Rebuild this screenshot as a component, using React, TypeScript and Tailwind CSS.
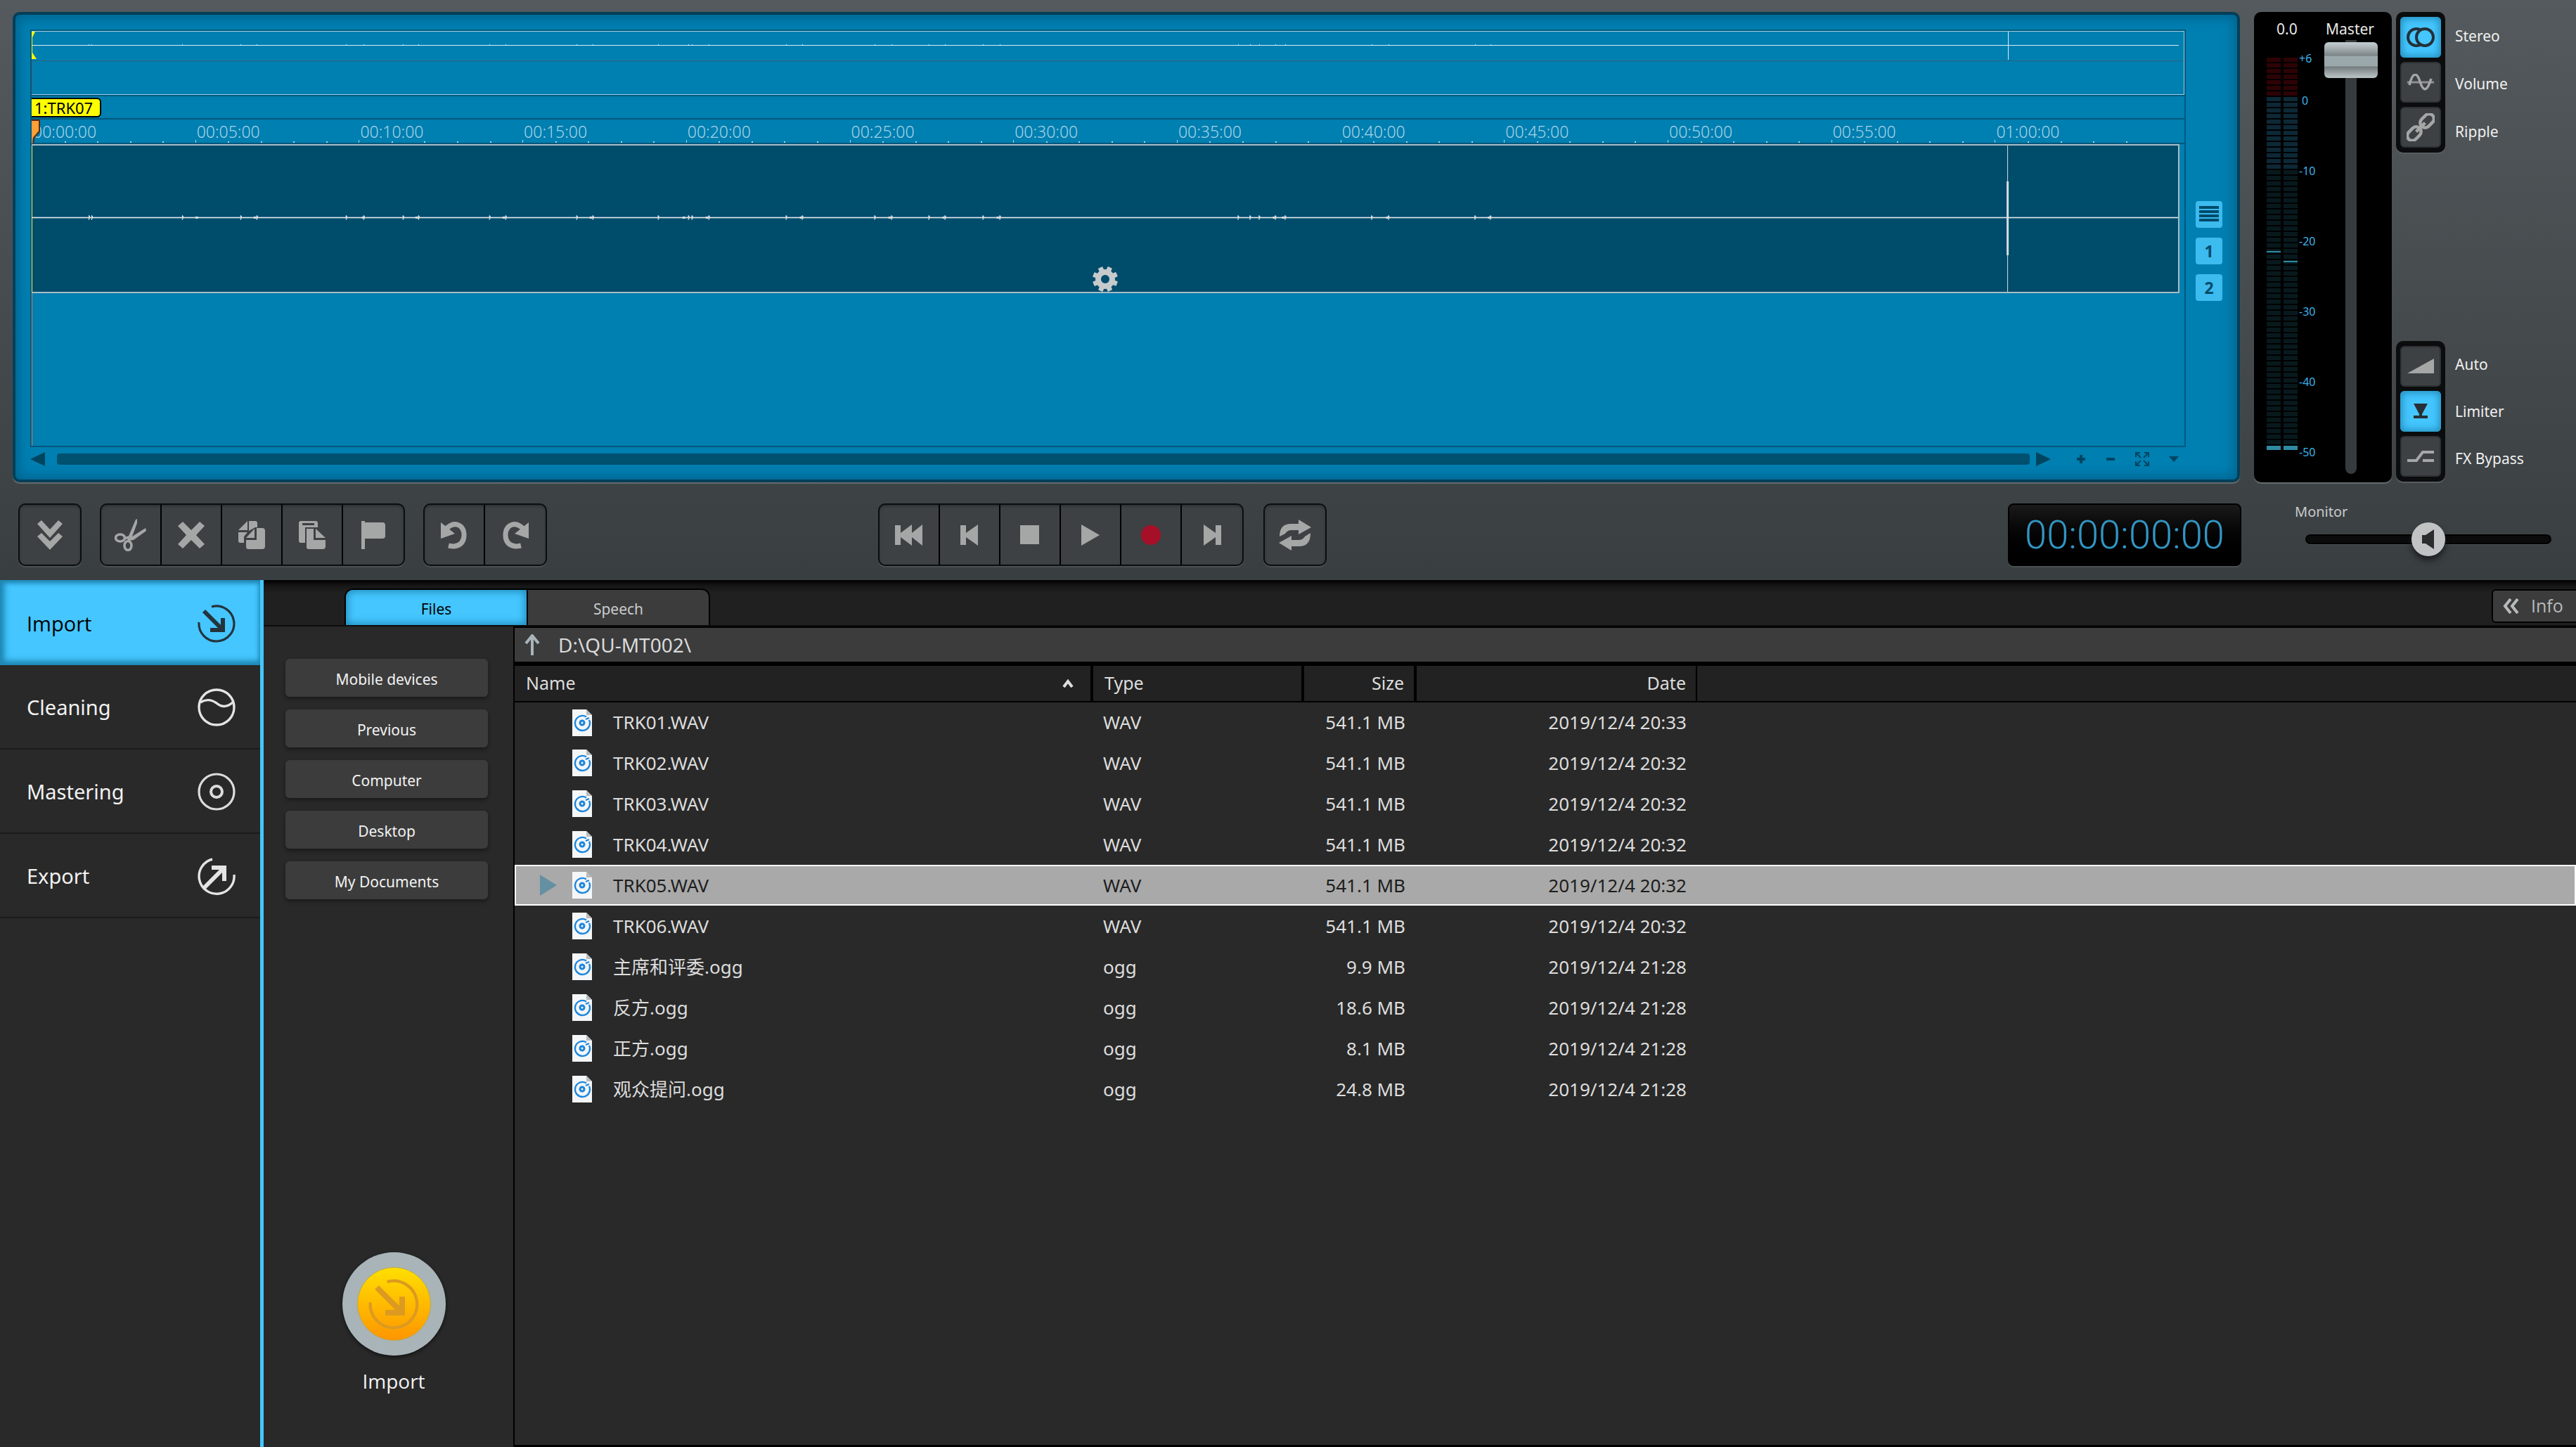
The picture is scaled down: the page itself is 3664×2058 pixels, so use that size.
import React from 'react';

const GREY = '#a5a7a7';

type SvgProps = { w: number; h: number; children: React.ReactNode; className?: string };
const Svg = ({ w, h, children, className }: SvgProps) => (
  <svg width={w} height={h} viewBox={`0 0 ${w} ${h}`} className={className} aria-hidden="true">
    {children}
  </svg>
);

/* ---------- toolbar icons ---------- */

const ChevronsDown = () => (
  <Svg w={36} h={42}>
    <path d="M0 5 L6 0 L18 13 L30 0 L36 5 L18 25 Z M0 23 L6 18 L18 30 L30 18 L36 23 L18 42 Z" fill={GREY} />
  </Svg>
);
const Scissors = () => (
  <Svg w={46} h={46}>
    <g fill="none" stroke={GREY} strokeWidth="3.5">
      <ellipse cx="8" cy="27" rx="6.5" ry="5" />
      <ellipse cx="19" cy="38" rx="5" ry="6.5" />
      <path d="M13 28 L24 25 M20 32 L22 24" />
    </g>
    <path d="M18 29 L30 1 L32 0 L32 6 L25 25 L44 13 L45 17 L27 30 L20 31 Z" fill={GREY} />
  </Svg>
);
const Cross = () => (
  <Svg w={38} h={38}>
    <path d="M0 6 L7 0 L19 12 L31 0 L38 6 L26 19 L38 32 L31 38 L19 26 L7 38 L0 32 L12 19 Z" fill={GREY} />
  </Svg>
);
const Copy = () => (
  <Svg w={38} h={40}>
    <g fill={GREY}>
      <path d="M0 13 L13 0 V13 Z" />
      <path d="M15 0 H24 Q27 0 27 3 V9 H24 L15 14 Z" />
      <path d="M0 16 H13 L8 22 V31 H3 Q0 31 0 28 Z" />
      <path d="M11 24 L23 11 V24 Z" />
      <path d="M26 10 H34 Q38 10 38 14 V36 Q38 40 34 40 H14 Q11 40 11 36 V27 H26 Z" />
    </g>
  </Svg>
);
const Paste = () => (
  <Svg w={38} h={40}>
    <g fill={GREY}>
      <path fillRule="evenodd" d="M3 0 H24 Q27 0 27 3 V9 H9 V31 H3 Q0 31 0 28 V3 Q0 0 3 0 Z M5 3 V6 H22 V3 Z" />
      <path d="M11 11 H21 V27 H38 V36 Q38 40 34 40 H14 Q11 40 11 37 Z" />
      <path d="M24 11 L38 24 H24 Z" />
    </g>
  </Svg>
);
const Flag = () => (
  <Svg w={34} h={40}>
    <path d="M0 0 H5 V2 H30 Q34 2 34 6 V21 Q34 25 30 25 H5 V40 H0 Z" fill={GREY} />
  </Svg>
);
const Undo = () => (
  <Svg w={38} h={40}>
    <path d="M7 12 Q15 3 23 5 Q33 8 33 20 Q33 34 19 36 Q15 36 11 35" fill="none" stroke={GREY} strokeWidth="7" />
    <path d="M0 2 L20 18 L0 25 Z" fill={GREY} />
  </Svg>
);
const Redo = () => (
  <Svg w={38} h={40}>
    <path d="M31 12 Q23 3 15 5 Q5 8 5 20 Q5 34 19 36 Q23 36 27 35" fill="none" stroke={GREY} strokeWidth="7" />
    <path d="M38 2 L18 18 L38 25 Z" fill={GREY} />
  </Svg>
);
const ToStart = () => (
  <Svg w={40} h={30}>
    <path d="M0 1 H8 V12 L24 0 V12 L39 0 V30 L24 18 V30 L8 18 V29 H0 Z" fill={GREY} />
  </Svg>
);
const Prev = () => (
  <Svg w={26} h={30}>
    <path d="M0 1 H8 V12 L25 0 V30 L8 18 V29 H0 Z" fill={GREY} />
  </Svg>
);
const Next = () => (
  <Svg w={26} h={30}>
    <path d="M26 1 H18 V12 L1 0 V30 L18 18 V29 H26 Z" fill={GREY} />
  </Svg>
);
const Stop = () => (
  <Svg w={28} h={28}>
    <rect width="27" height="27" fill={GREY} />
  </Svg>
);
const Play = () => (
  <Svg w={28} h={30}>
    <path d="M1 0 L27 15 L1 30 Z" fill={GREY} />
  </Svg>
);
const Record = () => (
  <Svg w={28} h={28}>
    <circle cx="14" cy="14" r="14" fill="#a60f28" />
  </Svg>
);
const Loop = () => (
  <Svg w={46} h={44}>
    <g fill={GREY}>
      <path d="M1 24 Q1 6 17 6 H28 V0 L46 11 L28 21 V15 H18 Q12 15 9 20 Z" />
      <path d="M45 19 Q45 38 29 38 H18 V44 L0 33 L18 23 V29 H28 Q34 29 37 24 Z" />
    </g>
  </Svg>
);

/* ---------- sidebar icons ---------- */

const ImportGlyph = ({ size, color }: { size: number; color: string }) => (
  <svg width={size} height={size} viewBox="0 0 54 54" aria-hidden="true" fill="none" stroke={color}>
    <path d="M20 3 A25 25 0 1 1 2 25" strokeWidth="3.2" />
    <path d="M9 9 L34 34" strokeWidth="6" />
    <path d="M36 19 V36 H18" strokeWidth="6" />
  </svg>
);
const CleaningGlyph = () => (
  <Svg w={54} h={54}>
    <g fill="none" stroke="#e4e4e4" strokeWidth="3.4">
      <circle cx="27" cy="27" r="25" />
      <path d="M4 20 C12 15 20 16 27 21 C34 27 42 27 50 20" />
    </g>
  </Svg>
);
const MasteringGlyph = () => (
  <Svg w={54} h={54}>
    <g fill="none" stroke="#dcdcdc" strokeWidth="3.2">
      <circle cx="27" cy="27" r="25" />
      <circle cx="27" cy="27" r="8" strokeWidth="4" />
    </g>
  </Svg>
);
const ExportGlyph = () => (
  <Svg w={54} h={54}>
    <g fill="none" stroke="#e4e4e4">
      <path d="M21 3 A25 25 0 1 0 52 25" strokeWidth="3.4" />
      <path d="M9 44 L36 17" strokeWidth="6" />
      <path d="M20 15 H38 V34" strokeWidth="6" />
    </g>
  </Svg>
);

/* ---------- mixer icons ---------- */

const StereoIcon = () => (
  <Svg w={40} h={28}>
    <g fill="none" stroke="#23313a" strokeWidth="4">
      <circle cx="14" cy="14" r="12" />
      <circle cx="26" cy="14" r="12" fill="#45c6ff" />
    </g>
  </Svg>
);
const VolumeIcon = () => (
  <Svg w={38} h={24}>
    <path d="M0 12 H38" stroke="#8e9091" strokeWidth="3" />
    <path d="M3 16 C8 -4 14 -2 18 11 C23 26 28 26 34 7" fill="none" stroke={GREY} strokeWidth="3.5" />
  </Svg>
);
const RippleIcon = () => (
  <Svg w={40} h={40}>
    <g fill="none" stroke={GREY} strokeWidth="4.5" transform="rotate(-45 20 20)">
      <rect x="-4" y="13" width="22" height="14" rx="7" />
      <rect x="22" y="13" width="22" height="14" rx="7" />
      <path d="M11 20 H29" />
    </g>
  </Svg>
);
const AutoIcon = () => (
  <Svg w={38} h={22}>
    <path d="M0 21 L38 0 V21 Z" fill={GREY} />
  </Svg>
);
const LimiterIcon = () => (
  <Svg w={22} h={22}>
    <path d="M1 0 H21 L13 15 V17 H21 V21 H1 V17 H9 V15 Z" fill="#263036" />
  </Svg>
);
const BypassIcon = () => (
  <Svg w={38} h={18}>
    <path d="M0 15 H13 L22 3 H38 M22 15 H38" fill="none" stroke={GREY} strokeWidth="4" />
  </Svg>
);

const GearIcon = () => (
  <Svg w={36} h={36}>
    <g fill="#c6cacc">
      <path fillRule="evenodd" d="M18 4 a14 14 0 1 0 0.01 0 Z M18 12 a6 6 0 1 1 -0.01 0 Z" />
      {[22, 67, 112, 157, 202, 247, 292, 337].map((a) => (
        <rect key={a} x="14.5" y="0" width="7" height="8" rx="1" transform={`rotate(${a} 18 18)`} />
      ))}
    </g>
  </Svg>
);

const FileIcon = () => (
  <Svg w={28} h={38}>
    <path d="M0 0 H20 L28 8 V38 H0 Z" fill="#f4f6f7" />
    <path d="M20 0 L28 8 H20 Z" fill="#b9bcbe" />
    <path d="M20 10.500 A10.500 10.500 0 1 0 24 15" fill="none" stroke="#1c86dd" strokeWidth="2.400" />
    <circle cx="14" cy="19" r="3" fill="none" stroke="#1c86dd" strokeWidth="3" />
    <path d="M19 14 L24 12" stroke="#1c86dd" strokeWidth="2.400" />
  </Svg>
);

/* ---------- arranger ---------- */

const BLIPS = [
  81, 85, 214, 297, 320, 447, 472, 528, 550, 651, 674, 775, 798, 891, 934, 939, 963, 1073, 1096, 1199, 1223, 1276,
  1299, 1353, 1377, 1716, 1733, 1746, 1769, 1783, 1906, 1930, 2053, 2075,
];
const WIDE_BLIPS = [235, 318, 472, 548, 672, 796, 928, 961, 1095, 1221, 1298, 1375, 1768, 1781, 1929, 2074];

const TIMES = [
  '00:00:00', '00:05:00', '00:10:00', '00:15:00', '00:20:00', '00:25:00', '00:30:00',
  '00:35:00', '00:40:00', '00:45:00', '00:50:00', '00:55:00', '01:00:00',
];

const Arranger = () => (
  <section
    aria-label="Arranger"
    className="flex flex-1 flex-col rounded-[10px] border-4 border-[#043f57] bg-[#007fb1] px-[21px] pt-[21px] pb-3 shadow-[inset_0_0_18px_3px_#00608a,0_2px_1px_#686d70]"
  >
    <div className="flex">
      <div className="min-w-0 flex-1 border-2 border-[#00587c]">
        {/* overview */}
        <div className="h-[91px] border border-[#9fd0e6] border-l-0">
          <svg width="100%" height="89" viewBox="0 0 3061 89" preserveAspectRatio="none" aria-hidden="true" className="block">
            <rect x="0" y="41" width="3061" height="1" fill="#2a6583" />
            <rect x="0" y="19" width="3054" height="1" fill="#d6edf6" />
            {BLIPS.map((x) => (
              <rect key={x} x={x} y="18" width="1" height="1" fill="#d6edf6" />
            ))}
            <rect x="2811" y="0" width="1" height="40" fill="#d6edf6" />
            <path d="M0 42 V89" stroke="#8a4a4a" strokeWidth="1" />
            <path d="M0 0 H5 L1 8 V30 L7 39 H0 Z" fill="#ffff00" />
          </svg>
        </div>
        {/* marker lane */}
        <div className="flex h-[35px] items-center border-y-2 border-[#00587c]">
          <div className="flex h-7 items-center rounded-r-md border-2 border-l-0 border-black bg-[#ffff00] pr-2.5 pl-1 text-[22px] leading-6 text-black">
            1:TRK07
          </div>
        </div>
        {/* ruler */}
        <div className="relative h-[35px] border-b-2 border-[#00587c]">
          <div className="flex h-full overflow-hidden">
            {TIMES.map((t) => (
              <div key={t} className="relative w-[7.6%] shrink-0 pl-0.5 text-[23px] leading-[34px] font-light text-[#a9d4e6]">
                {t}
                <div className="absolute inset-x-0 bottom-0 flex h-1 items-end">
                  <span className="h-1 w-1/5 border-l border-[#a9d4e6]" />
                  <span className="h-0.5 w-1/5 border-l-2 border-[#a9d4e6]" />
                  <span className="h-0.5 w-1/5 border-l-2 border-[#a9d4e6]" />
                  <span className="h-0.5 w-1/5 border-l-2 border-[#a9d4e6]" />
                  <span className="h-0.5 w-1/5 border-l-2 border-[#a9d4e6]" />
                </div>
              </div>
            ))}
          </div>
          <svg width="14" height="34" viewBox="0 0 14 34" className="absolute top-0 left-0" aria-hidden="true">
            <path d="M0 0 H10 V16 L1 28 V34 H0 Z" fill="#ff9f38" />
            <path d="M0 1 H11 V17 L3 26 V34" fill="none" stroke="#5b2c12" strokeWidth="2" />
          </svg>
        </div>
        {/* track */}
        <div className="relative mr-[7px] h-[212px] border-2 border-l-0 border-[#a9bcc6] bg-[#004c6b]">
          <svg width="100%" height="208" viewBox="0 0 3054 208" preserveAspectRatio="none" className="block" aria-hidden="true">
            <rect x="0" y="101" width="3054" height="3" fill="#4a7f98" />
            <rect x="0" y="102" width="3054" height="1" fill="#e2e8ea" />
            {BLIPS.map((x) => (
              <g key={x} fill="#d5dcdf">
                <rect x={x} y="99" width="1" height="7" />
                <rect x={x} y="100" width="2" height="4" />
              </g>
            ))}
            {WIDE_BLIPS.map((x) => (
              <rect key={x} x={x - 2} y="101" width="4" height="3" fill="#d5dcdf" />
            ))}
            <rect x="2811" y="0" width="1" height="208" fill="#d5dcdf" />
            <rect x="2810" y="51" width="3" height="105" fill="#d5dcdf" />
            <rect x="0" y="0" width="1" height="208" fill="#f5ee5a" />
          </svg>
          <button aria-label="Track settings" className="absolute bottom-0 left-1/2 -translate-x-1/2">
            <GearIcon />
          </button>
        </div>
        <div className="h-[217px] border-l border-[#c08a6a]" />
      </div>
      <div className="flex flex-col gap-3.5 pt-[244px] pl-3.5">
        <button aria-label="All tracks" className="flex size-[38px] items-center justify-center rounded bg-[#3cbbef]">
          <Svg w={28} h={24}>
            <path d="M0 2 H28 M0 8 H28 M0 14 H28 M0 20 H28" stroke="#004c6b" strokeWidth="4" />
          </Svg>
        </button>
        <button className="size-[38px] rounded bg-[#3cbbef] text-[23px] leading-[38px] font-bold text-[#004c6b]">1</button>
        <button className="size-[38px] rounded bg-[#3cbbef] text-[23px] leading-[38px] font-bold text-[#004c6b]">2</button>
      </div>
    </div>
    <div className="flex h-[34px] items-center pr-[62px] text-[#004560]">
      <button aria-label="Scroll left">
        <Svg w={22} h={22}><path d="M0 11 L21 1 V21 Z" fill="currentColor" /></Svg>
      </button>
      <div className="mr-2 ml-4 h-4 flex-1 rounded bg-[#00506f]" />
      <button aria-label="Scroll right">
        <Svg w={22} h={22}><path d="M22 11 L1 1 V21 Z" fill="currentColor" /></Svg>
      </button>
      <div className="flex items-center gap-7 pl-9">
        <button aria-label="Zoom in">
          <Svg w={14} h={14}><path d="M5 1 H9 V5 H13 V9 H9 V13 H5 V9 H1 V5 H5 Z" fill="currentColor" /></Svg>
        </button>
        <button aria-label="Zoom out">
          <Svg w={14} h={14}><path d="M1 5 H13 V9 H1 Z" fill="currentColor" /></Svg>
        </button>
        <button aria-label="Zoom to fit">
          <Svg w={20} h={20}>
            <g fill="none" stroke="currentColor" strokeWidth="2">
              <path d="M1 7 V1 H7 M13 1 H19 V7 M19 13 V19 H13 M7 19 H1 V13" />
              <path d="M1 1 L8 8 M19 1 L12 8 M19 19 L12 12 M1 19 L8 12" />
            </g>
          </Svg>
        </button>
        <button aria-label="Zoom menu">
          <Svg w={14} h={10}><path d="M0 1 H14 L7 9 Z" fill="currentColor" /></Svg>
        </button>
      </div>
    </div>
  </section>
);

/* ---------- master meter ---------- */

const SCALE = ['0', '-10', '-20', '-30', '-40'];

const segmentColor = (i: number) => {
  if (i < 7) return 'h-1.5 bg-[#2d0205]';
  if (i < 20) return 'h-1.5 bg-[#0d2836]';
  if (i < 69) return 'h-1.5 bg-[#08191d]';
  return 'h-1.5 bg-[#2f8ba3]';
};

const MeterBar = ({ peak }: { peak: React.ReactNode }) => (
  <div className="relative flex w-5 flex-col gap-0.5">
    {Array.from({ length: 70 }, (_, i) => (
      <span key={i} className={segmentColor(i)} />
    ))}
    {peak}
  </div>
);

const Master = () => (
  <section aria-label="Master" className="flex w-[196px] flex-col rounded-[10px] bg-black pl-[18px] shadow-[0_2px_1px_#686d70]">
    <div className="flex pt-2 pl-3.5 text-[21px] leading-[32px] text-[#e8e8e8]">
      <span className="w-[70px]">0.0</span>
      <label htmlFor="master-fader">Master</label>
    </div>
    <div className="flex">
      <div className="flex gap-1 pt-[25px]">
        <MeterBar peak={<i className="absolute top-[275px] h-0.5 w-5 bg-[#2f8ba3]" />} />
        <MeterBar peak={<i className="absolute top-[289px] h-0.5 w-5 bg-[#2f8ba3]" />} />
      </div>
      <div className="w-[38px] pt-4 pl-0.5 text-[16px] leading-5 text-[#3db2e8]">
        <div className="h-[60px]">+6</div>
        {SCALE.map((s) => (
          <div key={s} className={s === '0' ? 'h-[100px] pl-1' : 'h-[100px]'}>{s}</div>
        ))}
        <div>-50</div>
      </div>
      <div className="relative h-[617px] w-[76px]">
        <div className="mx-auto h-full w-4 rounded-b-full bg-[#353b3e]" />
        <div className="absolute inset-x-0 top-[3px] h-[51px] rounded-md bg-[linear-gradient(#c3ced3_0%,#a9b1b4_16%,#7b8487_37%,#9ba8ab_40%,#9ba8ab_66%,#747c7e_69%,#b4bdc0_96%)]" />
        <input id="master-fader" type="range" aria-label="Master" defaultValue={95} className="absolute inset-0 h-full w-full opacity-0" />
      </div>
    </div>
  </section>
);

type Toggle = { label: string; icon: React.ReactNode; on?: boolean };

const ToggleStack = ({ items, rows }: { items: Toggle[]; rows: string }) => (
  <div className="flex items-start gap-3.5">
    <div className="flex flex-col gap-1.5 rounded-[10px] bg-[#0b0c0d] px-1.5 py-[7px] shadow-[0_2px_1px_#595e61]">
      {items.map((t) => (
        <button
          key={t.label}
          id={`toggle-${t.label}`}
          aria-labelledby={`label-${t.label}`}
          aria-pressed={!!t.on}
          className={
            t.on
              ? 'flex size-[58px] items-center justify-center rounded-md bg-[#45c6ff] shadow-[inset_0_0_12px_2px_#1f88b5]'
              : 'flex size-[58px] items-center justify-center rounded-md border-2 border-[#2e3234] bg-[#3d4143]'
          }
        >
          {t.icon}
        </button>
      ))}
    </div>
    <div className="flex flex-col text-[21px] text-[#f0f0f0]">
      {items.map((t) => (
        <label key={t.label} id={`label-${t.label}`} htmlFor={`toggle-${t.label}`} className={rows}>
          {t.label}
        </label>
      ))}
    </div>
  </div>
);

/* ---------- transport ---------- */

const ButtonGroup = ({ items }: { items: [string, React.ReactNode][] }) => (
  <div className="flex divide-x-2 divide-black rounded-[10px] border-2 border-[#0b0d0e] bg-[#3d4143] shadow-[0_2px_1px_#4b5254,inset_0_2px_3px_#2c3032]">
    {items.map(([label, icon]) => (
      <button key={label} aria-label={label} className="flex h-[85px] w-[86px] items-center justify-center">
        {icon}
      </button>
    ))}
  </div>
);

const Transport = () => (
  <div className="flex pt-[30px] pb-5 pl-[26px]">
    <div className="flex gap-[26px]">
      <ButtonGroup items={[['Expand', <ChevronsDown />]]} />
      <ButtonGroup items={[['Cut', <Scissors />], ['Delete', <Cross />], ['Copy', <Copy />], ['Paste', <Paste />], ['Set marker', <Flag />]]} />
      <ButtonGroup items={[['Undo', <Undo />], ['Redo', <Redo />]]} />
    </div>
    <div className="flex-[471]" />
    <div className="flex gap-7">
      <ButtonGroup items={[['To start', <ToStart />], ['Previous marker', <Prev />], ['Stop', <Stop />], ['Play', <Play />], ['Record', <Record />], ['Next marker', <Next />]]} />
      <ButtonGroup items={[['Loop', <Loop />]]} />
    </div>
    <div className="flex-[969]" />
    <div className="flex h-[89px] w-[332px] items-center justify-center rounded-lg border-2 border-black bg-linear-to-b from-[#1a1a1a] to-black font-['Roboto',sans-serif] text-[56px] leading-none font-light text-[#3296c4] shadow-[0_2px_1px_#4b5254]">
      00:00:00:00
    </div>
    <div className="w-[476px] pl-[76px]">
      <label htmlFor="monitor" className="block text-[20px] leading-6 text-[#c8cacb]">Monitor</label>
      <div className="relative ml-[15px] flex h-[54px] w-[350px] items-center">
        <div className="h-3.5 w-full rounded-full border-2 border-black bg-[#0b0b0c] shadow-[0_1px_1px_#4b5254]" />
        <div className="absolute left-1/2 flex size-12 -translate-x-1/2 items-center justify-center rounded-full bg-[#c0c2c3] shadow-[0_6px_8px_#1b1e20]">
          <Svg w={20} h={28}><path d="M1 8 H6 L18 0 V28 L6 20 H1 Z" fill="#2a2c2d" /></Svg>
        </div>
        <input id="monitor" type="range" defaultValue={50} className="absolute inset-0 h-full w-full opacity-0" />
      </div>
    </div>
  </div>
);

/* ---------- lower area ---------- */

const NAV: [string, React.ReactNode][] = [
  ['Cleaning', <CleaningGlyph />],
  ['Mastering', <MasteringGlyph />],
  ['Export', <ExportGlyph />],
];

const Sidebar = () => (
  <nav className="flex w-[375px] flex-col border-r-[5px] border-[#45c6ff] bg-[#292929] text-[29px] text-[#f2f2f2]">
    <button className="flex h-[121px] items-center justify-between bg-[#45c6ff] pt-0.5 pr-[35px] pl-[38px] font-['Open_Sans',sans-serif] text-black shadow-[inset_6px_0_10px_#1f88b5,inset_0_-6px_8px_#1f88b5,inset_0_4px_6px_#1f88b5]">
      Import <ImportGlyph size={54} color="#24343d" />
    </button>
    {NAV.map(([label, icon]) => (
      <button key={label} className="flex h-[120px] items-center justify-between border-b-2 border-[#1b1b1b] pt-0.5 pr-[35px] pl-[38px]">
        {label} {icon}
      </button>
    ))}
  </nav>
);

const PLACES = ['Mobile devices', 'Previous', 'Computer', 'Desktop', 'My Documents'];

const Places = () => (
  <div className="flex w-[357px] flex-col border-r-2 border-black bg-[#292929] pt-[46px] pr-[36px] pb-[74px] pl-[31px]">
    <div className="flex flex-col gap-[18px]">
      {PLACES.map((p) => (
        <button key={p} className="h-[54px] rounded-md bg-[#3c3c3c] pt-1.5 text-[21px] text-[#f2f2f2] shadow-[0_3px_5px_#1a1a1a]">
          {p}
        </button>
      ))}
    </div>
    <button className="mt-auto ml-5 flex flex-col items-center gap-4 font-['Open_Sans',sans-serif] text-[28px] leading-10 text-[#f2f2f2]">
      <span className="flex size-[147px] items-center justify-center rounded-full bg-[#a9b4b8] shadow-[0_2px_5px_#111]">
        <span className="flex size-[105px] items-center justify-center rounded-full border border-[#b9a84a] bg-linear-to-b from-[#ffdf00] to-[#ff9500]">
          <ImportGlyph size={72} color="#dc9a20" />
        </span>
      </span>
      Import
    </button>
  </div>
);

type Row = { name: string; type: string; size: string; date: string; selected?: boolean };
const ROWS: Row[] = [
  { name: 'TRK01.WAV', type: 'WAV', size: '541.1 MB', date: '2019/12/4 20:33' },
  { name: 'TRK02.WAV', type: 'WAV', size: '541.1 MB', date: '2019/12/4 20:32' },
  { name: 'TRK03.WAV', type: 'WAV', size: '541.1 MB', date: '2019/12/4 20:32' },
  { name: 'TRK04.WAV', type: 'WAV', size: '541.1 MB', date: '2019/12/4 20:32' },
  { name: 'TRK05.WAV', type: 'WAV', size: '541.1 MB', date: '2019/12/4 20:32', selected: true },
  { name: 'TRK06.WAV', type: 'WAV', size: '541.1 MB', date: '2019/12/4 20:32' },
  { name: '主席和评委.ogg', type: 'ogg', size: '9.9 MB', date: '2019/12/4 21:28' },
  { name: '反方.ogg', type: 'ogg', size: '18.6 MB', date: '2019/12/4 21:28' },
  { name: '正方.ogg', type: 'ogg', size: '8.1 MB', date: '2019/12/4 21:28' },
  { name: '观众提问.ogg', type: 'ogg', size: '24.8 MB', date: '2019/12/4 21:28' },
];

const Files = () => (
  <div className="flex min-w-0 flex-1 flex-col border-b-[3px] border-black bg-[#292929]">
    <div className="flex h-[50px] items-center gap-[26px] border-t-2 border-black bg-[#3c3c3c] pl-3.5 text-[28px] text-[#d8dadb]">
      <button aria-label="Up one folder">
        <Svg w={22} h={30}>
          <path d="M11 30 V3 M2 13 L11 2 L20 13" fill="none" stroke="#a9b4bb" strokeWidth="4" />
        </Svg>
      </button>
      <span>D:\QU-MT002\</span>
    </div>
    <table className="w-full table-fixed border-collapse text-[26px]">
      <colgroup>
        <col className="w-[821px]" />
        <col className="w-[300px]" />
        <col className="w-[160px]" />
        <col className="w-[400px]" />
        <col />
      </colgroup>
      <thead>
        <tr className="h-[54px] border-t-[6px] border-b-2 border-black bg-[#222222] text-[25px] text-[#dddddd]">
          <th className="border-r-4 border-black pr-6 pl-4 text-left font-normal">
            <div className="flex items-center justify-between">
              Name
              <Svg w={16} h={12}><path d="M2 11 L8 3 L14 11" fill="none" stroke="#dddddd" strokeWidth="4" /></Svg>
            </div>
          </th>
          <th className="border-r-4 border-black pl-4 text-left font-normal">Type</th>
          <th className="border-r-4 border-black pr-3.5 text-right font-normal">Size</th>
          <th className="border-r-2 border-black pr-3.5 text-right font-normal">Date</th>
          <th />
        </tr>
      </thead>
      <tbody>
        {ROWS.map((r) => (
          <tr
            key={r.name}
            className={
              r.selected
                ? 'h-[58px] bg-[#a9a9a9] text-[#1d1d1d] outline-2 -outline-offset-2 outline-white'
                : 'h-[58px] text-[#dddddd]'
            }
          >
            <td>
              <div className="flex items-center pl-[35px]">
                <span className="w-[47px]">
                  {r.selected && (
                    <Svg w={26} h={30}><path d="M1 0 L25 15 L1 30 Z" fill="#6590a2" /></Svg>
                  )}
                </span>
                <FileIcon />
                <span className="pl-[30px]">{r.name}</span>
              </div>
            </td>
            <td className="pl-4">{r.type}</td>
            <td className="pr-3.5 text-right">{r.size}</td>
            <td className="pr-3.5 text-right">{r.date}</td>
            <td />
          </tr>
        ))}
      </tbody>
    </table>
  </div>
);

export default function App() {
  return (
    <div className="flex min-h-screen flex-col bg-[#292929] font-['Noto_Sans','Noto_Sans_CJK_SC',sans-serif]">
      <header className="bg-linear-to-b from-[#545a5d] to-[#393e41]">
        <div className="flex pt-[17px] pl-[18px]">
          <Arranger />
          <div className="flex pl-5">
            <Master />
          </div>
          <div className="flex w-[262px] flex-col justify-between pl-1.5">
            <ToggleStack
              rows="leading-[68px]"
              items={[
                { label: 'Stereo', icon: <StereoIcon />, on: true },
                { label: 'Volume', icon: <VolumeIcon /> },
                { label: 'Ripple', icon: <RippleIcon /> },
              ]}
            />
            <ToggleStack
              rows="leading-[67px]"
              items={[
                { label: 'Auto', icon: <AutoIcon /> },
                { label: 'Limiter', icon: <LimiterIcon />, on: true },
                { label: 'FX Bypass', icon: <BypassIcon /> },
              ]}
            />
          </div>
        </div>
        <Transport />
      </header>
      <main className="flex flex-1">
        <Sidebar />
        <div className="flex min-w-0 flex-1 flex-col">
          <div className="flex h-[66px] items-end justify-between border-b-2 border-[#0c0c0c] bg-[linear-gradient(#000_0px,#161616_8px,#202020_18px)] pl-[115px]">
            <div role="tablist" className="flex rounded-t-[12px] border-2 border-b-0 border-black text-[21px]">
              <button role="tab" aria-selected="true" className="h-[50px] w-[257px] rounded-tl-[10px] bg-[#45c6ff] pt-1.5 text-black shadow-[inset_0_0_12px_2px_#1f88b5]">
                Files
              </button>
              <button role="tab" aria-selected="false" className="h-[50px] w-[259px] rounded-tr-[10px] border-l-2 border-black bg-[#3c3c3c] pt-1.5 text-[#c9cbcc]">
                Speech
              </button>
            </div>
            <button className="mb-[3px] flex h-12 w-[120px] items-center gap-4 rounded-l-md border-2 border-r-0 border-black bg-[#3c3c3c] pl-3.5 font-['Open_Sans',sans-serif] text-[25px] text-[#b8bbbd]">
              <Svg w={24} h={22}>
                <path d="M11 1 L3 11 L11 21 M21 1 L13 11 L21 21" fill="none" stroke="#b8bbbd" strokeWidth="4" />
              </Svg>
              Info
            </button>
          </div>
          <div className="flex flex-1">
            <Places />
            <Files />
          </div>
        </div>
      </main>
    </div>
  );
}
